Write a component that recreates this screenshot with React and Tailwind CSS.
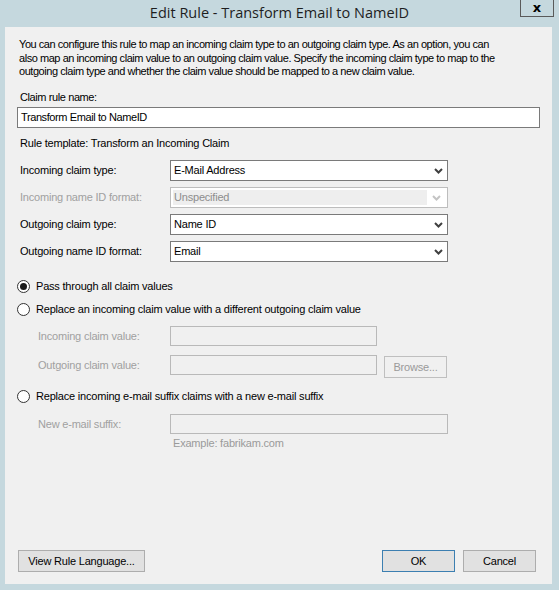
import React from "react";

const font = { fontFamily: '"Liberation Sans", Arial, sans-serif' };

function Chevron({ color = "#404040" }) {
  return (
    <svg width="9" height="6" viewBox="0 0 9 6" className="block">
      <polyline points="1,1 4.5,4.5 8,1" fill="none" stroke={color} strokeWidth="2" />
    </svg>
  );
}

function Select({ value, disabled }) {
  if (disabled) {
    return (
      <div className="w-[278px] h-[21px] border border-[#bdbdbd] bg-white flex items-stretch p-[2px]">
        <div className="flex-1 bg-[#eeeeee] flex items-center pl-[1px] text-[#8d8d8d]">{value}</div>
        <div className="w-[18px] flex items-center justify-center">
          <Chevron color="#c4c4c4" />
        </div>
      </div>
    );
  }
  return (
    <div className="w-[278px] h-[21px] border border-[#7a7a7a] bg-white flex items-center pl-[3px]">
      <div className="flex-1 text-black">{value}</div>
      <div className="w-[18px] flex items-center justify-center">
        <Chevron />
      </div>
    </div>
  );
}

function Radio({ checked }) {
  return (
    <div className="w-[13px] h-[13px] rounded-full border border-[#333333] bg-white flex items-center justify-center shrink-0">
      {checked && <div className="w-[7px] h-[7px] rounded-full bg-[#1a1a1a]" />}
    </div>
  );
}

function Button({ children, w, primary, disabled }) {
  return (
    <div
      className={
        "h-[22px] flex items-center justify-center border " +
        (disabled
          ? "border-[#bfbfbf] bg-[#f0f0f0] text-[#9a9a9a]"
          : primary
          ? "border-[#3c7fb1] bg-[#e1e1e1] text-black"
          : "border-[#adadad] bg-[#e1e1e1] text-black")
      }
      style={{ width: w }}
    >
      {children}
    </div>
  );
}

export default function App() {
  return (
    <div className="w-[559px] h-[590px] bg-[#c5d8de] flex flex-col overflow-hidden" style={font}>
      <div className="h-[27px] relative flex items-center justify-center">
        <div
          className="text-[14.5px] text-[#1e1e1e] leading-none -mt-[1px]"
          style={{ fontFamily: '"Open Sans", "Noto Sans", sans-serif' }}
        >
          Edit Rule - Transform Email to NameID
        </div>
        <div className="absolute left-[520px] top-0 w-[34px] h-[17px] border border-t-0 border-[#5a5a5a] flex items-center justify-center">
          <span className="text-[13px] font-bold leading-none text-black -mt-[2px]" style={{ fontFamily: '"DejaVu Sans", sans-serif' }}>x</span>
        </div>
      </div>

      <div className="ml-[5px] mr-[7px] h-[557px] bg-[#f0f0f0] flex flex-col pl-[12px] pt-[11px] pb-[12px] text-[11px] text-black tracking-[-0.2px]">
        <div className="ml-[2px] leading-[13.5px] tracking-[-0.45px]">
          You can configure this rule to map an incoming claim type to an outgoing claim type. As an option, you can
          <br />
          also map an incoming claim value to an outgoing claim value. Specify the incoming claim type to map to the
          <br />
          outgoing claim type and whether the claim value should be mapped to a new claim value.
        </div>

        <div className="ml-[3px] mt-[12px] leading-[13px] tracking-[-0.4px]">Claim rule name:</div>
        <div className="mt-[3.5px] w-[523px] h-[21px] border border-[#7a7a7a] bg-white flex items-center pl-[3px] tracking-[-0.4px]">
          Transform Email to NameID
        </div>
        <div className="ml-[3px] mt-[8.5px] leading-[13px]">Rule template: Transform an Incoming Claim</div>

        <div className="mt-[10.5px] flex flex-col gap-[6px]">
          <div className="flex items-center">
            <div className="w-[153px] pl-[3px]">Incoming claim type:</div>
            <Select value="E-Mail Address" />
          </div>
          <div className="flex items-center">
            <div className="w-[153px] pl-[3px] text-[#a0a0a0]">Incoming name ID format:</div>
            <Select value="Unspecified" disabled />
          </div>
          <div className="flex items-center">
            <div className="w-[153px] pl-[3px]">Outgoing claim type:</div>
            <Select value="Name ID" />
          </div>
          <div className="flex items-center">
            <div className="w-[153px] pl-[3px]">Outgoing name ID format:</div>
            <Select value="Email" />
          </div>
        </div>

        <div className="mt-[16px] h-[16px] flex items-center gap-[6px]">
          <Radio checked />
          <span>Pass through all claim values</span>
        </div>
        <div className="mt-[7px] h-[16px] flex items-center gap-[6px]">
          <Radio />
          <span>Replace an incoming claim value with a different outgoing claim value</span>
        </div>

        <div className="mt-[9px] flex items-center">
          <div className="w-[153px] pl-[21px] text-[#a0a0a0]">Incoming claim value:</div>
          <div className="w-[207px] h-[20px] border border-[#b9b9b9]" />
        </div>
        <div className="mt-[9px] h-[20px] flex items-start">
          <div className="w-[153px] pl-[21px] h-[20px] flex items-center text-[#a0a0a0]">Outgoing claim value:</div>
          <div className="w-[207px] h-[20px] border border-[#b9b9b9]" />
          <div className="ml-[7px] mt-[1px]">
            <Button w={63} disabled>Browse...</Button>
          </div>
        </div>

        <div className="mt-[13px] h-[16px] flex items-center gap-[6px]">
          <Radio />
          <span>Replace incoming e-mail suffix claims with a new e-mail suffix</span>
        </div>
        <div className="mt-[10px] flex items-center">
          <div className="w-[153px] pl-[21px] text-[#a0a0a0]">New e-mail suffix:</div>
          <div className="w-[278px] h-[20px] border border-[#b9b9b9]" />
        </div>
        <div className="mt-[2.5px] ml-[156px] leading-[13px] text-[#9a9a9a]">Example: fabrikam.com</div>

        <div className="flex-1" />
        <div className="flex items-center pl-[1px] pr-[16px]">
          <Button w={127}>View Rule Language...</Button>
          <div className="flex-1" />
          <Button w={73} primary>OK</Button>
          <div className="w-[8px]" />
          <Button w={73}>Cancel</Button>
        </div>
      </div>
      <div className="flex-1" />
    </div>
  );
}
